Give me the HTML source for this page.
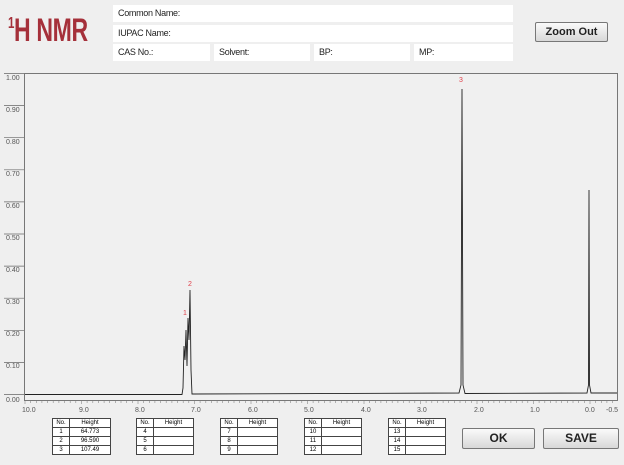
<!DOCTYPE html>
<html><head><style>
body{margin:0;width:624px;height:465px;background:#efefef;font-family:"Liberation Sans",sans-serif;position:relative;overflow:hidden}
.a{position:absolute}
.f{position:absolute;background:#fff;font-size:9px;color:#222;line-height:17px;padding-left:5px;box-sizing:border-box;font-family:"Liberation Sans Narrow","Liberation Sans",sans-serif;letter-spacing:-0.3px}
.btn{position:absolute;border:1px solid #777;border-radius:2px;background:linear-gradient(#fafafa,#d8d8d8);font-weight:bold;text-align:center;box-sizing:border-box;color:#222}
table{position:absolute;border-collapse:collapse;background:#fff;font-size:6px}
td{border:1px solid #444;height:8px;padding:0 2px;text-align:center;line-height:8px}
</style></head><body>
<div class="a" style="left:8px;top:12px;color:#a5303a;font-weight:bold;font-size:32px;letter-spacing:-0.5px;transform:scaleX(0.72);transform-origin:left"><sup style="font-size:16px;vertical-align:13px">1</sup>H NMR</div>
<div class="f" style="left:113px;top:5px;width:400px;height:17px">Common Name:</div>
<div class="f" style="left:113px;top:25px;width:400px;height:17px">IUPAC Name:</div>
<div class="f" style="left:113px;top:44px;width:97px;height:17px">CAS No.:</div>
<div class="f" style="left:214px;top:44px;width:96px;height:17px">Solvent:</div>
<div class="f" style="left:314px;top:44px;width:96px;height:17px">BP:</div>
<div class="f" style="left:414px;top:44px;width:99px;height:17px">MP:</div>
<div class="btn" style="left:535px;top:22px;width:73px;height:20px;font-size:11px;line-height:18px">Zoom Out</div>
<svg class="a" style="left:0;top:0" width="624" height="465">
<g font-size="7" fill="#555">
<rect x="24.5" y="73.5" width="593" height="327" fill="#f0f0f0" stroke="#777"/>
<g stroke="#666" stroke-width="0.7">
<line x1="4" y1="73.5" x2="24" y2="73.5"/><line x1="4" y1="105.6" x2="24" y2="105.6"/><line x1="4" y1="137.7" x2="24" y2="137.7"/><line x1="4" y1="169.8" x2="24" y2="169.8"/><line x1="4" y1="201.9" x2="24" y2="201.9"/><line x1="4" y1="234" x2="24" y2="234"/><line x1="4" y1="266.1" x2="24" y2="266.1"/><line x1="4" y1="298.2" x2="24" y2="298.2"/><line x1="4" y1="330.3" x2="24" y2="330.3"/><line x1="4" y1="362.4" x2="24" y2="362.4"/><line x1="4" y1="394.5" x2="24" y2="394.5"/>
</g>
<text x="6" y="80">1.00</text><text x="6" y="112">0.90</text><text x="6" y="144">0.80</text><text x="6" y="176">0.70</text><text x="6" y="208">0.60</text><text x="6" y="240">0.50</text><text x="6" y="272">0.40</text><text x="6" y="304">0.30</text><text x="6" y="336">0.20</text><text x="6" y="368">0.10</text><text x="6" y="402">0.00</text>
<g stroke="#888" stroke-width="0.6">
<path d="M25 401v3M30.6 401v2M36.3 401v2M41.9 401v2M47.6 401v2M53.2 401v2M58.9 401v2M64.5 401v2M70.2 401v2M75.8 401v2M81.5 401v3M87.1 401v2M92.8 401v2M98.4 401v2M104.1 401v2M109.7 401v2M115.4 401v2M121 401v2M126.7 401v2M132.3 401v2M138 401v3M143.6 401v2M149.3 401v2M154.9 401v2M160.6 401v2M166.2 401v2M171.9 401v2M177.5 401v2M183.2 401v2M188.8 401v2M194.5 401v3M200.1 401v2M205.8 401v2M211.4 401v2M217.1 401v2M222.7 401v2M228.4 401v2M234 401v2M239.7 401v2M245.3 401v2M251 401v3M256.6 401v2M262.3 401v2M267.9 401v2M273.6 401v2M279.2 401v2M284.9 401v2M290.5 401v2M296.2 401v2M301.8 401v2M307.5 401v3M313.1 401v2M318.8 401v2M324.4 401v2M330.1 401v2M335.7 401v2M341.4 401v2M347 401v2M352.7 401v2M358.3 401v2M364 401v3M369.6 401v2M375.3 401v2M380.9 401v2M386.6 401v2M392.2 401v2M397.9 401v2M403.5 401v2M409.2 401v2M414.8 401v2M420.5 401v3M426.1 401v2M431.8 401v2M437.4 401v2M443.1 401v2M448.7 401v2M454.4 401v2M460 401v2M465.7 401v2M471.3 401v2M477 401v3M482.6 401v2M488.3 401v2M493.9 401v2M499.6 401v2M505.2 401v2M510.9 401v2M516.5 401v2M522.2 401v2M527.8 401v2M533.5 401v3M539.1 401v2M544.8 401v2M550.4 401v2M556.1 401v2M561.7 401v2M567.4 401v2M573 401v2M578.7 401v2M584.3 401v2M590 401v3M595.6 401v2M601.3 401v2M606.9 401v2M612.6 401v2"/>
</g>
<g font-size="7">
<text x="22" y="412">10.0</text><text x="79" y="412">9.0</text><text x="135" y="412">8.0</text><text x="191" y="412">7.0</text><text x="248" y="412">6.0</text><text x="304" y="412">5.0</text><text x="361" y="412">4.0</text><text x="417" y="412">3.0</text><text x="474" y="412">2.0</text><text x="530" y="412">1.0</text><text x="585" y="412">0.0</text><text x="606" y="412">-0.5</text>
</g>
</g>
<path d="M25 394.5 L182 394.5 L183 388 L184 346 L185 360 L186 330 L187 366 L188 318 L189 340 L190 290 L191 370 L192 394 L459 393 L461 385 L462 89 L463 385 L465 393.5 L587 393 L588.5 385 L589 190 L589.5 385 L591 393 L617 393" fill="none" stroke="#222" stroke-width="0.9"/>
<g fill="#e0404a" font-size="7"><text x="183" y="315">1</text><text x="188" y="286">2</text><text x="459" y="82">3</text></g>
</svg>
<table style="left:52px;top:418px;width:59px"><tr><td style="width:12px">No.</td><td>Height</td></tr><tr><td>1</td><td>64.773</td></tr><tr><td>2</td><td>96.590</td></tr><tr><td>3</td><td>107.49</td></tr></table>
<table style="left:136px;top:418px;width:58px"><tr><td style="width:12px">No.</td><td>Height</td></tr><tr><td>4</td><td></td></tr><tr><td>5</td><td></td></tr><tr><td>6</td><td></td></tr></table>
<table style="left:220px;top:418px;width:58px"><tr><td style="width:12px">No.</td><td>Height</td></tr><tr><td>7</td><td></td></tr><tr><td>8</td><td></td></tr><tr><td>9</td><td></td></tr></table>
<table style="left:304px;top:418px;width:58px"><tr><td style="width:12px">No.</td><td>Height</td></tr><tr><td>10</td><td></td></tr><tr><td>11</td><td></td></tr><tr><td>12</td><td></td></tr></table>
<table style="left:388px;top:418px;width:58px"><tr><td style="width:12px">No.</td><td>Height</td></tr><tr><td>13</td><td></td></tr><tr><td>14</td><td></td></tr><tr><td>15</td><td></td></tr></table>
<div class="btn" style="left:462px;top:428px;width:73px;height:21px;font-size:12px;line-height:19px">OK</div>
<div class="btn" style="left:543px;top:428px;width:76px;height:21px;font-size:12px;line-height:19px">SAVE</div>
</body></html>
